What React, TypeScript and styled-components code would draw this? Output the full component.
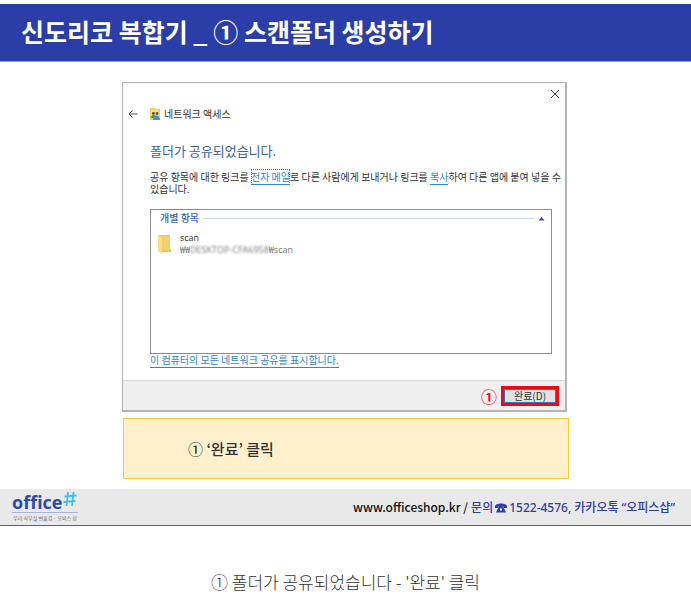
import React from "react";
import styled, { createGlobalStyle } from "styled-components";

const GlobalStyle = createGlobalStyle`
  * { box-sizing: border-box; }
  body {
    margin: 0;
    background: #fff;
    color: #333;
    font-family: "Noto Sans CJK KR", sans-serif;
  }
`;

const Page = styled.main`
  padding-top: 4px;
`;

const Banner = styled.header`
  display: flex;
  align-items: center;
  height: 58px;
  padding: 0 21px 4px;
  background: #2b3ea7;
  border-bottom: 1px solid #9a9fd6;
`;

const Title = styled.h1`
  margin: 0;
  color: #fff;
  font-size: 25px;
  font-weight: 700;
  line-height: 36px;
  white-space: nowrap;
`;

const Stage = styled.section`
  display: flex;
  flex-direction: column;
  gap: 6px;
  width: 65%;
  min-width: 445px;
  max-width: 447px;
  margin: 20px auto 10px;
`;

const Dialog = styled.section`
  margin-right: 2px;
  border: 1px solid #b4b4b4;
  border-right-width: 2px;
  border-bottom-width: 2px;
  background: #fff;
  color: #333;
  font-size: 10px;
  line-height: 12px;
`;

const CloseRow = styled.div`
  display: flex;
  justify-content: flex-end;
  padding: 6px 5px 0;
`;

const IconButton = styled.button`
  display: flex;
  padding: 0;
  border: 0;
  background: none;
  color: #444;
`;

const DialogBar = styled.div`
  display: flex;
  align-items: center;
  height: 18px;
  margin-top: 6px;
  padding-left: 5px;
`;

const DialogName = styled.span`
  margin-left: 4px;
`;

const BarIcon = styled.span`
  display: flex;
  margin-left: 12px;
`;

const DialogBody = styled.div`
  padding: 20px 13px 14px 27px;
`;

const DialogTitle = styled.h2`
  margin: 0 0 12px;
  color: #3b5fae;
  font-size: 13px;
  font-weight: 400;
  line-height: 16px;
`;

const Description = styled.p`
  margin: 0 0 14px;
  white-space: nowrap;
`;

const Link = styled.a<{ $focused?: boolean }>`
  color: #3186d6;
  text-decoration: none;
  border-bottom: 1px solid #3186d6;
  outline: ${(p) => (p.$focused ? "1px dotted #777" : "none")};
  outline-offset: -1px;
`;

const ItemPanel = styled.section`
  height: 145px;
  padding: 2px 6px 0 7px;
  border: 1px solid #8c8e96;
`;

const GroupHead = styled.div`
  display: flex;
  align-items: center;
  gap: 4px;
  padding-left: 2px;
  color: #3b5fae;
`;

const GroupName = styled.h3`
  margin: 0;
  font-size: 10px;
  font-weight: 500;
  line-height: 12px;
`;

const GroupLine = styled.span`
  flex: 1;
  height: 1px;
  background: #cfd9ee;
`;

const Item = styled.div`
  display: flex;
  align-items: center;
  gap: 8px;
  margin-top: 8px;
`;

const ItemText = styled.div`
  font-family: "Open Sans", "Noto Sans CJK KR", sans-serif;
  font-size: 9px;
  line-height: 12px;
`;

const Path = styled.div`
  color: #777;
`;

const Redacted = styled.span`
  filter: blur(1px);
`;

const Actions = styled.footer`
  display: flex;
  align-items: center;
  justify-content: flex-end;
  gap: 4px;
  height: 30px;
  padding-right: 6px;
  border-top: 1px solid #dfdfdf;
  background: #efefef;
`;

const Marker = styled.span`
  color: #ee1c25;
  font-size: 16px;
  font-weight: 700;
  line-height: 20px;
`;

const DoneButton = styled.button`
  width: 58px;
  height: 20px;
  padding: 0;
  border: 3px solid #ee0a14;
  background: #e2e2e2;
  box-shadow: inset 0 0 0 1px #3f6fae;
  color: #333;
  font-family: inherit;
  font-size: 10px;
  line-height: 12px;
`;

const Callout = styled.p`
  display: flex;
  align-items: center;
  height: 61px;
  margin: 0 0 0 1px;
  padding-left: 64px;
  border: 1px solid #fccb33;
  background: #fff0cd;
  color: #333;
  font-size: 15px;
  font-weight: 500;
`;

const Footer = styled.footer`
  display: flex;
  align-items: center;
  justify-content: space-between;
  height: 37px;
  padding: 0 16px 0 12px;
  border-bottom: 1px solid #4c5eb2;
  background: #e9e9e9;
`;

const Brand = styled.div`
  display: flex;
  flex-direction: column;
  width: 66px;
`;

const Wordmark = styled.span`
  display: flex;
  align-items: flex-start;
  gap: 1px;
  height: 22px;
  border-bottom: 1px solid #a9b3d9;
  color: #2d4ba3;
  font-family: "Open Sans", sans-serif;
  font-size: 18px;
  font-weight: 700;
  line-height: 22px;
`;

const Tagline = styled.span`
  color: #666;
  font-size: 5px;
  line-height: 10px;
  text-align: center;
  white-space: nowrap;
`;

const Contact = styled.p`
  margin: 0;
  color: #2c3ea8;
  font-family: "Noto Sans", "Noto Sans CJK KR", sans-serif;
  font-size: 12px;
  font-weight: 500;
  line-height: 18px;
  white-space: nowrap;
`;

const Site = styled.a`
  color: #111;
  font-family: "Noto Sans CJK KR", sans-serif;
  font-weight: 500;
  text-decoration: none;
`;

const Phone = styled.svg`
  margin: 0 2px;
  vertical-align: -1px;
`;

const Caption = styled.p`
  margin: 43px 0 0;
  color: #333;
  font-size: 17px;
  font-weight: 300;
  line-height: 26px;
  text-align: center;
`;

function BackArrow() {
  return (
    <svg width="10" height="10" viewBox="0 0 10 10" fill="none" stroke="#555">
      <path d="M9.5 5H1M4.5 1.5L1 5l3.5 3.5" />
    </svg>
  );
}

function CloseIcon() {
  return (
    <svg width="10" height="10" viewBox="0 0 10 10" fill="none" stroke="#444">
      <path d="M1 1l8 8M9 1L1 9" />
    </svg>
  );
}

function SharedFolderIcon() {
  return (
    <svg width="10" height="12" viewBox="0 0 10 12">
      <path d="M0 0h5l1 1h4v11H0z" fill="#f3cf62" />
      <path d="M1 2h8v6H1z" fill="#f9dd84" />
      <circle cx="3.4" cy="5.5" r="1.4" fill="#5a4d34" />
      <circle cx="7" cy="5.5" r="1.4" fill="#5a4d34" />
      <path d="M1 10c0-4 5-4 5 0z" fill="#3c8f76" />
      <path d="M3 12c0-6 7-6 7 0z" fill="#3c93cf" />
    </svg>
  );
}

function FolderIcon() {
  return (
    <svg width="14" height="20" viewBox="0 0 14 20">
      <path d="M1 1h11v14h1v3H4z" fill="#eac35a" />
      <path d="M4 2h8v14H4z" fill="#f4cf6b" />
      <path d="M0 1l4 3v16l-4-3z" fill="#fbe08c" />
    </svg>
  );
}

function HashIcon() {
  return (
    <svg width="14" height="16" viewBox="0 0 14 16" fill="none" stroke="#3fc0ee" strokeWidth="1.8">
      <path d="M5 1L3.500 15M10.500 1L9 15M1.500 5.500l12-1M.5 11l12-1" />
    </svg>
  );
}

export default function App() {
  return (
    <>
      <GlobalStyle />
      <Page>
        <Banner>
          <Title>신도리코 복합기 _ ① 스캔폴더 생성하기</Title>
        </Banner>
        <Stage>
          <Dialog aria-label="네트워크 액세스">
            <CloseRow>
              <IconButton aria-label="닫기">
                <CloseIcon />
              </IconButton>
            </CloseRow>
            <DialogBar>
              <IconButton aria-label="뒤로">
                <BackArrow />
              </IconButton>
              <BarIcon>
                <SharedFolderIcon />
              </BarIcon>
              <DialogName>네트워크 액세스</DialogName>
            </DialogBar>
            <DialogBody>
              <DialogTitle>폴더가 공유되었습니다.</DialogTitle>
              <Description>
                공유 항목에 대한 링크를 <Link href="#mail" $focused>전자 메일</Link>로 다른 사람에게 보내거나 링크를{" "}
                <Link href="#copy">복사</Link>하여 다른 앱에 붙여 넣을 수
                <br />
                있습니다.
              </Description>
              <ItemPanel>
                <GroupHead>
                  <GroupName>개별 항목</GroupName>
                  <GroupLine />
                  <svg width="7" height="5" viewBox="0 0 7 5">
                    <path d="M.5 4.500L3.500 1l3 3.500z" fill="#2b4da0" />
                  </svg>
                </GroupHead>
                <Item>
                  <FolderIcon />
                  <ItemText>
                    <div>scan</div>
                    <Path>
                      ₩₩<Redacted>DESKTOP-CFA6958</Redacted>₩scan
                    </Path>
                  </ItemText>
                </Item>
              </ItemPanel>
              <Link href="#shares">이 컴퓨터의 모든 네트워크 공유를 표시합니다.</Link>
            </DialogBody>
            <Actions>
              <Marker>①</Marker>
              <DoneButton>완료(D)</DoneButton>
            </Actions>
          </Dialog>
          <Callout>① ‘완료’ 클릭</Callout>
        </Stage>
        <Footer>
          <Brand>
            <Wordmark>
              office
              <HashIcon />
            </Wordmark>
            <Tagline>우리 사무실 변옮김 · 오피스 샵</Tagline>
          </Brand>
          <Contact>
            <Site href="#site">www.officeshop.kr /</Site> 문의
            <Phone width="12" height="10" viewBox="0 0 12 10" fill="#2c3ea8">
              <path d="M0 3.500C0-.5 12-.5 12 3.500V5H9V3.500H3V5H0z" />
              <path fillRule="evenodd" d="M4 3h4L11 9.500H1zM6 5.300a1.200 1.200 0 100 2.400 1.200 1.200 0 000-2.400z" />
            </Phone>
            1522-4576, 카카오톡 “오피스샵”
          </Contact>
        </Footer>
        <Caption>① 폴더가 공유되었습니다 - '완료' 클릭</Caption>
      </Page>
    </>
  );
}
